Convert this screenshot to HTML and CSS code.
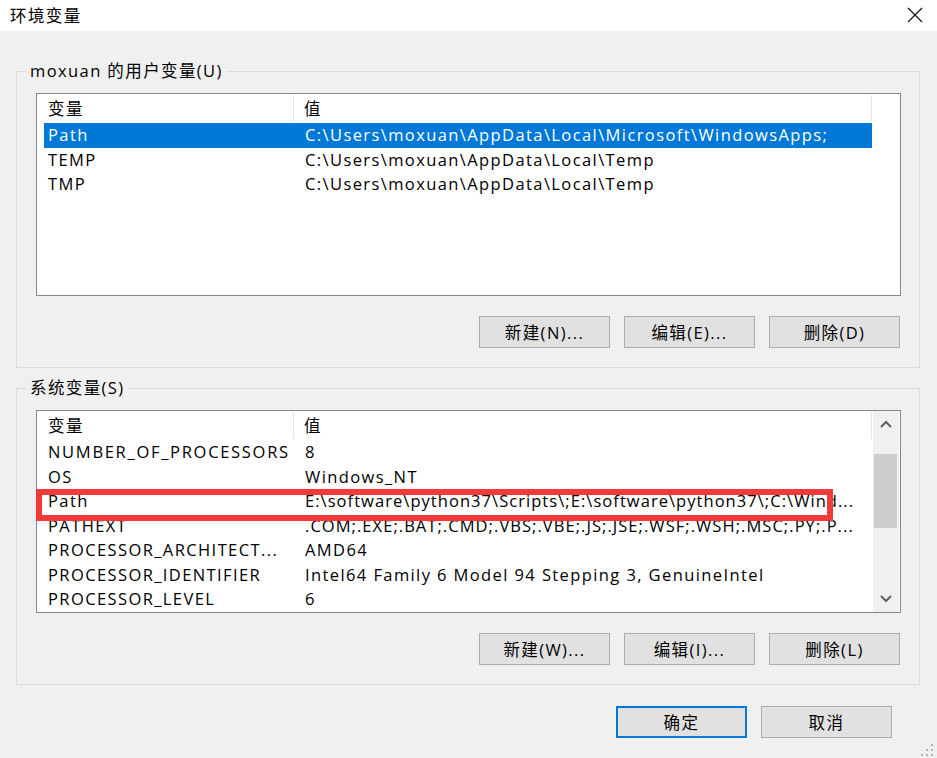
FILE: index.html
```html
<!DOCTYPE html>
<html lang="zh-CN">
<head>
<meta charset="utf-8">
<title>环境变量</title>
<link rel="stylesheet" href="styles.css">
</head>
<body>
<div class="window">
  <div class="titlebar">
    <span class="title">环境变量</span>
    <svg class="close" width="16" height="16" viewBox="0 0 16 16"><path d="M1 1L15 15M15 1L1 15" stroke="#111" stroke-width="1.2" fill="none"/></svg>
  </div>
  <div class="main">
    <fieldset class="group">
      <legend class="legend">moxuan 的用户变量(U)</legend>
      <div class="list">
        <div class="table">
          <div class="thead">
            <div class="th th1">变量</div>
            <div class="th th2">值</div>
          </div>
          <div class="row selected"><div class="c1">Path</div><div class="c2">C:\Users\moxuan\AppData\Local\Microsoft\WindowsApps;</div></div>
          <div class="row"><div class="c1">TEMP</div><div class="c2">C:\Users\moxuan\AppData\Local\Temp</div></div>
          <div class="row"><div class="c1">TMP</div><div class="c2">C:\Users\moxuan\AppData\Local\Temp</div></div>
        </div>
      </div>
      <div class="btnrow">
        <button class="btn">新建(N)...</button>
        <button class="btn">编辑(E)...</button>
        <button class="btn">删除(D)</button>
      </div>
    </fieldset>
    <fieldset class="group group2">
      <legend class="legend">系统变量(S)</legend>
      <div class="list sys">
        <div class="table">
          <div class="thead">
            <div class="th th1">变量</div>
            <div class="th th2">值</div>
          </div>
          <div class="row"><div class="c1 wide">NUMBER_OF_PROCESSORS</div><div class="c2">8</div></div>
          <div class="row"><div class="c1">OS</div><div class="c2">Windows_NT</div></div>
          <div class="row"><div class="c1">Path</div><div class="c2 tight">E:\software\python37\Scripts\;E:\software\python37\;C:\Wind...</div></div>
          <div class="row"><div class="c1">PATHEXT</div><div class="c2 tight">.COM;.EXE;.BAT;.CMD;.VBS;.VBE;.JS;.JSE;.WSF;.WSH;.MSC;.PY;.P...</div></div>
          <div class="row"><div class="c1">PROCESSOR_ARCHITECT...</div><div class="c2">AMD64</div></div>
          <div class="row"><div class="c1">PROCESSOR_IDENTIFIER</div><div class="c2">Intel64 Family 6 Model 94 Stepping 3, GenuineIntel</div></div>
          <div class="row"><div class="c1">PROCESSOR_LEVEL</div><div class="c2">6</div></div>
        </div>
        <div class="scrollbar">
          <div class="sb-btn"><svg width="12" height="8" viewBox="0 0 12 8"><path d="M1 7L6 2L11 7" stroke="#606060" stroke-width="2" fill="none"/></svg></div>
          <div class="sb-track"><div class="sb-thumb"></div></div>
          <div class="sb-btn"><svg width="12" height="8" viewBox="0 0 12 8"><path d="M1 1L6 6L11 1" stroke="#606060" stroke-width="2" fill="none"/></svg></div>
        </div>
        <div class="highlight"></div>
      </div>
      <div class="btnrow">
        <button class="btn">新建(W)...</button>
        <button class="btn">编辑(I)...</button>
        <button class="btn">删除(L)</button>
      </div>
    </fieldset>
    <div class="footer">
      <button class="btn btn-default">确定</button>
      <button class="btn">取消</button>
    </div>
  </div>
  <svg class="grip" width="14" height="14" viewBox="0 0 14 14">
    <rect x="11" y="1" width="2" height="2" fill="#b4b4b4"/>
    <rect x="6" y="6" width="2" height="2" fill="#b4b4b4"/>
    <rect x="11" y="6" width="2" height="2" fill="#b4b4b4"/>
    <rect x="1" y="11" width="2" height="2" fill="#b4b4b4"/>
    <rect x="6" y="11" width="2" height="2" fill="#b4b4b4"/>
    <rect x="11" y="11" width="2" height="2" fill="#b4b4b4"/>
  </svg>
</div>
</body>
</html>
```
FILE: styles.css
```css
* { box-sizing: border-box; }
html, body { margin: 0; padding: 0; }
body {
  font-family: "Open Sans", "Noto Sans CJK SC", sans-serif;
  font-size: 16.5px;
  letter-spacing: 1.4px;
  color: #000;
  background: #f0f0f0;
}
.window {
  position: relative;
  width: 937px;
  height: 758px;
  background: #f0f0f0;
  overflow: hidden;
}
.titlebar {
  height: 31px;
  background: #fff;
  display: flex;
  align-items: center;
  justify-content: space-between;
  padding: 0 14px 2px 10px;
}
.close { display: block; }
.main {
  padding: 30px 0 0 16px;
}
.group {
  margin: 0;
  width: 904px;
  border: 1px solid #dcdcdc;
  padding: 12px 18px 19px 19px;
  min-width: 0;
}
.group2 { margin-top: 10px; }
.legend {
  margin-left: -10px;
  padding: 0 4px 0 4px;
  line-height: 20px;
  height: 20px;
}
.list {
  position: relative;
  width: 865px;
  height: 203px;
  background: #fff;
  border: 1px solid #828790;
  display: flex;
}
.table {
  flex: 1;
  padding-left: 7px;
  min-width: 0;
}
.thead {
  display: flex;
  height: 29px;
  width: 828px;
}
.th {
  margin-top: 1px;
  height: 27px;
  line-height: 27px;
  border-right: 1px solid #e5e5e5;
}
.th1 { width: 250px; padding-left: 4px; }
.th2 { width: 578px; padding-left: 10px; }
.row {
  display: flex;
  width: 828px;
  height: 24.5px;
  line-height: 24.5px;
  white-space: nowrap;
}
.row.selected {
  background: #0078d7;
  color: #fff;
}
.c1 { width: 250px; padding-left: 4px; overflow: hidden; }
.c2 { width: 578px; padding-left: 11px; overflow: hidden; }
.c1.wide { letter-spacing: 1.7px; }
.c2.tight { letter-spacing: 1.05px; }
.scrollbar {
  width: 26px;
  background: #f0f0f0;
  display: flex;
  flex-direction: column;
  margin-right: 1px;
}
.sb-btn {
  height: 26px;
  display: flex;
  align-items: center;
  justify-content: center;
}
.sb-btn svg { display: block; }
.sb-track {
  flex: 1;
  padding: 17px 2px 0 1px;
}
.sb-thumb {
  height: 74px;
  background: #cdcdcd;
}
.highlight {
  position: absolute;
  left: -1px;
  top: 78px;
  width: 797px;
  height: 32px;
  border: 6px solid #f33a3a;
  pointer-events: none;
}
.btnrow {
  display: flex;
  justify-content: flex-end;
  gap: 14px;
  margin-top: 20px;
  padding-right: 1px;
}
.btn {
  width: 131px;
  height: 32px;
  background: #e1e1e1;
  border: 1px solid #adadad;
  font-family: "Open Sans", "Noto Sans CJK SC", sans-serif;
  font-size: 16.5px;
  letter-spacing: 1.4px;
  color: #000;
  padding: 0;
  border-radius: 0;
}
.btn-default {
  border: 2px solid #0078d7;
}
.footer {
  display: flex;
  justify-content: flex-end;
  gap: 14px;
  margin-top: 21px;
  padding-right: 45px;
}
.grip {
  position: absolute;
  right: 3px;
  bottom: 1px;
}
```
